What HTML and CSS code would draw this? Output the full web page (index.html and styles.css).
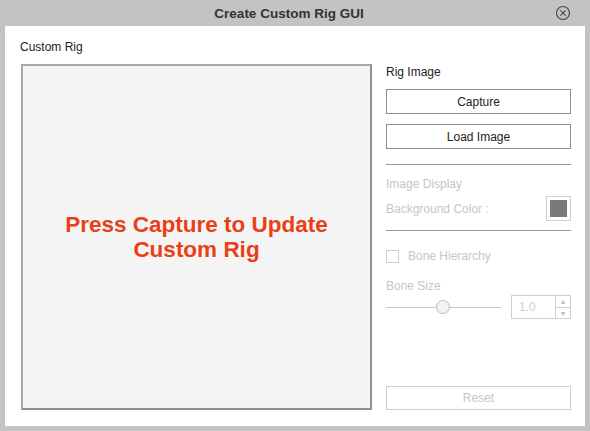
FILE: index.html
```html
<!DOCTYPE html>
<html lang="en">
<head>
    <meta charset="UTF-8">
    <title>Create Custom Rig GUI</title>
    <link rel="stylesheet" href="styles.css">
</head>
<body>
    <div class="window">
        <header class="titlebar">
            <span class="title">Create Custom Rig GUI</span>
            <svg class="close" width="16" height="16" viewBox="0 0 16 16">
                <circle cx="8" cy="8" r="6.5" fill="none" stroke="#444" stroke-width="1.1"/>
                <path d="M5.4 5.4 L10.6 10.6 M10.6 5.4 L5.4 10.6" stroke="#444" stroke-width="1.1"/>
            </svg>
        </header>
        <div class="content">
            <div class="label">Custom Rig</div>
            <div class="main">
                <div class="canvas">
                    <p class="hint">Press Capture to Update<br>Custom Rig</p>
                </div>
                <div class="side">
                    <div class="label">Rig Image</div>
                    <button class="btn capture">Capture</button>
                    <button class="btn load">Load Image</button>
                    <hr class="sep first">
                    <div class="label off display">Image Display</div>
                    <div class="row bg-row">
                        <span class="label off">Background Color :</span>
                        <span class="swatch"><span class="swatch-fill"></span></span>
                    </div>
                    <hr class="sep second">
                    <div class="row check-row">
                        <span class="checkbox"></span>
                        <span class="label off">Bone Hierarchy</span>
                    </div>
                    <div class="label off size">Bone Size</div>
                    <div class="row slider-row">
                        <div class="slider">
                            <span class="track"></span>
                            <span class="knob"></span>
                        </div>
                        <div class="spin">
                            <span class="spin-value">1.0</span>
                            <span class="spin-arrows">
                                <span class="arrow">&#9650;</span>
                                <span class="arrow">&#9660;</span>
                            </span>
                        </div>
                    </div>
                    <button class="btn reset">Reset</button>
                </div>
            </div>
        </div>
    </div>
</body>
</html>
```

FILE: styles.css
```css
body {
    margin: 0;
    background: #c3c3c3;
    font-family: 'Liberation Sans', Arial, sans-serif;
    font-size: 12px;
    color: #222;
}

.window {
    width: 590px;
    height: 431px;
    display: flex;
    flex-direction: column;
}

.titlebar {
    height: 26px;
    display: flex;
    align-items: center;
    justify-content: center;
    position: relative;
}

.title {
    font-weight: bold;
    font-size: 13.5px;
    color: #333;
    padding-right: 12px;
}

.close {
    position: absolute;
    right: 19px;
    top: 5px;
}

.content {
    background: #fff;
    margin: 0 5px 5px;
    height: 400px;
    box-sizing: border-box;
    padding: 13px 14px 16px 16px;
    display: flex;
    flex-direction: column;
}

.label {
    line-height: 16px;
    height: 16px;
    white-space: nowrap;
}

.content > .label {
    margin-left: -1px;
    margin-bottom: 9px;
}

.main {
    display: flex;
    gap: 14px;
    flex: 1;
}

.canvas {
    width: 351px;
    box-sizing: border-box;
    border: 2px solid #8e8e8e;
    border-top-color: #a8a8a8;
    border-left-color: #a8a8a8;
    background: #f4f4f4;
    display: flex;
    align-items: center;
    justify-content: center;
}

.hint {
    margin: 0;
    text-align: center;
    font-weight: bold;
    font-size: 22.5px;
    line-height: 25px;
    color: #ea3f16;
}

.side {
    width: 185px;
    display: flex;
    flex-direction: column;
}

.btn {
    font-family: inherit;
    font-size: 12px;
    color: #222;
    background: #fff;
    border: 1px solid #8c8c8c;
    height: 25px;
    padding: 0;
}

.capture {
    margin-top: 9px;
}

.load {
    margin-top: 10px;
}

.sep {
    border: none;
    border-top: 1px solid #9a9a9a;
    margin: 0;
    width: 100%;
}

.sep.first {
    margin-top: 15px;
}

.off {
    color: #c6c6c6;
}

.display {
    margin-top: 11px;
}

.row {
    display: flex;
    align-items: center;
}

.bg-row {
    justify-content: space-between;
    margin-top: 4px;
}

.swatch {
    width: 25px;
    height: 25px;
    box-sizing: border-box;
    border: 1px solid #cfcfcf;
    display: flex;
    align-items: center;
    justify-content: center;
}

.swatch-fill {
    width: 17px;
    height: 17px;
    background: #7a7a7a;
}

.sep.second {
    margin-top: 9px;
}

.check-row {
    margin-top: 17px;
    gap: 9px;
}

.checkbox {
    width: 13px;
    height: 13px;
    box-sizing: border-box;
    border: 1px solid #cfcfcf;
}

.size {
    margin-top: 14px;
}

.slider-row {
    margin-top: 1px;
    justify-content: space-between;
}

.slider {
    width: 115px;
    height: 24px;
    position: relative;
    display: flex;
    align-items: center;
}

.track {
    width: 100%;
    border-top: 1px solid #c8c8c8;
}

.knob {
    position: absolute;
    left: 50px;
    top: 5px;
    width: 14px;
    height: 14px;
    box-sizing: border-box;
    border: 1px solid #bcbcbc;
    border-radius: 50%;
    background: #f3f3f3;
}

.spin {
    width: 60px;
    height: 24px;
    box-sizing: border-box;
    border: 1px solid #cfcfcf;
    display: flex;
}

.spin-value {
    flex: 1;
    color: #d0d0d0;
    line-height: 22px;
    padding-left: 7px;
}

.spin-arrows {
    width: 14px;
    border-left: 1px solid #cfcfcf;
    display: flex;
    flex-direction: column;
}

.arrow {
    flex: 1;
    font-size: 7px;
    color: #bdbdbd;
    text-align: center;
    line-height: 11px;
}

.arrow + .arrow {
    border-top: 1px solid #cfcfcf;
}

.reset {
    margin-top: auto;
    height: 24px;
    border-color: #cfcfcf;
    color: #c6c6c6;
}
```
